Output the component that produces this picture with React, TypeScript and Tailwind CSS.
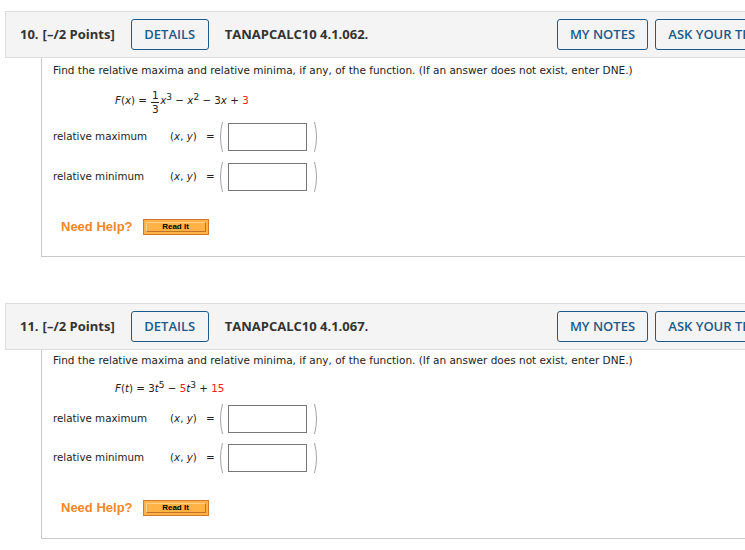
import React from "react";

const body = { fontFamily: '"DejaVu Sans", Verdana, sans-serif' };
const head = { fontFamily: '"Open Sans", sans-serif' };

function Paren({ right }: { right?: boolean }) {
  return (
    <svg width="8" height="32" viewBox="0 0 8 32" className="shrink-0">
      <path
        d={right ? "M2.5 1 Q6.5 16 2.5 31" : "M5.5 1 Q1.5 16 5.5 31"}
        fill="none"
        stroke="#999"
        strokeWidth="0.9"
      />
    </svg>
  );
}

function AnswerRow({ label, mt }: { label: string; mt: string }) {
  return (
    <div className={`flex items-center h-[30px] ${mt}`}>
      <span className="w-[117px] text-[10.3px] text-[#222]">{label}</span>
      <span className="text-[10.3px] text-[#222] w-[36px]">
        (<i>x</i>, <i>y</i>)
      </span>
      <span className="text-[10.3px] text-[#222] w-[11px]">=</span>
      <Paren />
      <div className="ml-[3px] w-[79px] h-[28px] border border-[#777] bg-white" />
      <span className="ml-[5px]">
        <Paren right />
      </span>
    </div>
  );
}

function Header({ num, code }: { num: string; code: string }) {
  return (
    <div
      className="flex items-center h-[47px] w-[815px] ml-[5px] pl-[14px] pr-[14px] bg-[#f4f4f4] border border-[#dcdcdc]"
      style={head}
    >
      <span className="text-[13px] font-bold text-[#333]">{num}</span>
      <span className="ml-[4px] text-[13px] font-bold text-[#333]">[–/2 Points]</span>
      <div className="ml-[16px] w-[78px] h-[31px] flex items-center justify-center rounded-[3px] border border-[#1d5a8a] text-[13px] font-semibold text-[#1d5a8a]">
        DETAILS
      </div>
      <span className="ml-[16px] text-[13px] font-bold text-[#333]">{code}</span>
      <div className="flex-1" />
      <div className="w-[91px] h-[31px] flex items-center justify-center rounded-[3px] border border-[#1d5a8a] text-[13px] font-semibold text-[#1d5a8a]">
        MY NOTES
      </div>
      <div className="ml-[7px] w-[150px] h-[31px] flex items-center justify-center rounded-[3px] border border-[#1d5a8a] text-[13px] font-semibold text-[#1d5a8a] whitespace-nowrap">
        ASK YOUR TEACHER
      </div>
    </div>
  );
}

function Help({ mt }: { mt: string }) {
  return (
    <div className={`flex items-center h-[20px] pl-[8px] ${mt}`}>
      <span
        className="text-[13px] font-bold text-[#f5862b]"
        style={{ fontFamily: '"Liberation Sans", Arial, sans-serif' }}
      >
        Need Help?
      </span>
      <div className="ml-[10px] w-[66px] h-[16px] border border-[#d4772c] bg-[#ffb347] p-[2px]">
        <div
          className="w-full h-full border border-t-[#ffd08a] border-l-[#ffd08a] border-b-[#c8702a] border-r-[#c8702a] flex items-center justify-center text-[8px] font-bold text-black"
          style={{ fontFamily: '"Liberation Sans", Arial, sans-serif' }}
        >
          Read It
        </div>
      </div>
    </div>
  );
}

const prompt =
  "Find the relative maxima and relative minima, if any, of the function. (If an answer does not exist, enter DNE.)";

export default function App() {
  return (
    <div className="w-[745px] h-[550px] overflow-hidden bg-white pt-[11px]" style={body}>
      {/* question 10 */}
      <Header num="10." code="TANAPCALC10 4.1.062." />
      <div className="ml-[41px] w-[760px] border-l border-b border-[#c8c8c8] pl-[11px] pt-[5px] pb-[19px]">
        <div className="h-[16px] flex items-center text-[10.5px] text-[#222]">{prompt}</div>
        <div className="mt-[7px] h-[30px] pl-[62px] flex items-center text-[10.3px] text-[#222]">
          <span>
            <i>F</i>(<i>x</i>) =&nbsp;
          </span>
          <span className="inline-flex flex-col items-center text-[10.5px] leading-[11px] mx-[1px] mt-[2px]">
            <span>1</span>
            <span className="w-[8px] border-t border-[#222] my-[1px]" />
            <span>3</span>
          </span>
          <span>
            <i>x</i>
            <sup className="text-[9px]">3</sup> − <i>x</i>
            <sup className="text-[9px]">2</sup> − 3<i>x</i> +{" "}
            <span className="text-[#ff1a1a]">3</span>
          </span>
        </div>
        <AnswerRow label="relative maximum" mt="mt-[6px]" />
        <AnswerRow label="relative minimum" mt="mt-[10px]" />
        <Help mt="mt-[25px]" />
      </div>

      <div className="h-[46px]" />

      {/* question 11 */}
      <Header num="11." code="TANAPCALC10 4.1.067." />
      <div className="ml-[41px] w-[760px] border-l border-b border-[#c8c8c8] pl-[11px] pt-[3px] pb-[20px]">
        <div className="h-[16px] flex items-center text-[10.5px] text-[#222]">{prompt}</div>
        <div className="mt-[10px] h-[20px] pl-[62px] flex items-center text-[10.3px] text-[#222]">
          <span>
            <i>F</i>(<i>t</i>) = 3<i>t</i>
            <sup className="text-[9px]">5</sup> − <span className="text-[#ff1a1a]">5</span>
            <i>t</i>
            <sup className="text-[9px]">3</sup> + <span className="text-[#ff1a1a]">15</span>
          </span>
        </div>
        <AnswerRow label="relative maximum" mt="mt-[5px]" />
        <AnswerRow label="relative minimum" mt="mt-[9px]" />
        <Help mt="mt-[25px]" />
      </div>
    </div>
  );
}
